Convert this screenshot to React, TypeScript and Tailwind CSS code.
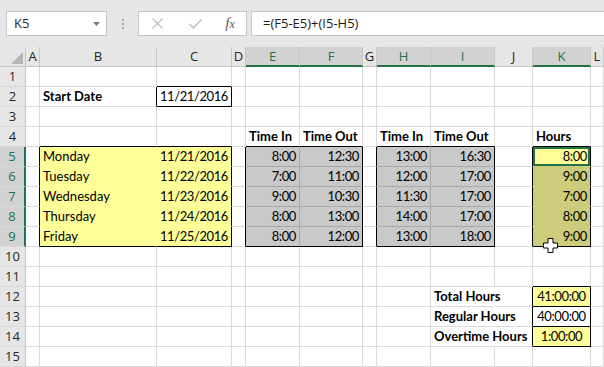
import React from 'react';

type Fill = 'yellow' | 'gray' | 'olive' | undefined;
type Edge = 'grid' | 'black' | 'white' | 'yellow' | 'gray' | 'olive' | 'inner';

interface Cell {
  t: string;
  b?: boolean;
  a?: 'l' | 'r' | 'c';
}

const COLS = ['A', 'B', 'C', 'D', 'E', 'F', 'G', 'H', 'I', 'J', 'K', 'L'];
const HOT_COLS = ['E', 'F', 'H', 'I', 'K'];
const ROWS = Array.from({ length: 15 }, (_, i) => i + 1);

const days = ['Monday', 'Tuesday', 'Wednesday', 'Thursday', 'Friday'];
const dates = ['11/21/2016', '11/22/2016', '11/23/2016', '11/24/2016', '11/25/2016'];
const e = ['8:00', '7:00', '9:00', '8:00', '8:00'];
const f = ['12:30', '11:00', '10:30', '13:00', '12:00'];
const h = ['13:00', '12:00', '11:30', '14:00', '13:00'];
const i_ = ['16:30', '17:00', '17:00', '17:00', '18:00'];
const k = ['8:00', '9:00', '7:00', '8:00', '9:00'];

const cells: Record<string, Cell> = {
  B2: { t: 'Start Date', b: true },
  C2: { t: '11/21/2016', a: 'r' },
  E4: { t: 'Time In', b: true },
  F4: { t: 'Time Out', b: true },
  H4: { t: 'Time In', b: true },
  I4: { t: 'Time Out', b: true },
  K4: { t: 'Hours', b: true },
  I12: { t: 'Total Hours', b: true },
  I13: { t: 'Regular Hours', b: true },
  I14: { t: 'Overtime Hours', b: true },
  K12: { t: '41:00:00', a: 'c' },
  K13: { t: '40:00:00', a: 'c' },
  K14: { t: '1:00:00', a: 'c' },
};
days.forEach((d, n) => {
  const r = n + 5;
  cells['B' + r] = { t: d };
  cells['C' + r] = { t: dates[n], a: 'r' };
  cells['E' + r] = { t: e[n], a: 'r' };
  cells['F' + r] = { t: f[n], a: 'r' };
  cells['H' + r] = { t: h[n], a: 'r' };
  cells['I' + r] = { t: i_[n], a: 'r' };
  cells['K' + r] = { t: k[n], a: 'r' };
});

// column index 1 = A ... 12 = L
const ci = (c: string) => COLS.indexOf(c) + 1;

const boxes = [
  [ci('C'), ci('C'), 2, 2],
  [ci('B'), ci('C'), 5, 9],
  [ci('E'), ci('F'), 5, 9],
  [ci('H'), ci('I'), 5, 9],
  [ci('K'), ci('K'), 5, 9],
  [ci('K'), ci('K'), 12, 12],
  [ci('K'), ci('K'), 13, 13],
  [ci('K'), ci('K'), 14, 14],
];

function fillAt(c: number, r: number): Fill {
  if (r >= 5 && r <= 9 && (c === 2 || c === 3)) return 'yellow';
  if (r >= 5 && r <= 9 && (c === 5 || c === 6 || c === 8 || c === 9)) return 'gray';
  if (c === 11 && r === 5) return 'yellow';
  if (c === 11 && r >= 6 && r <= 9) return 'olive';
  if (c === 11 && (r === 12 || r === 14)) return 'yellow';
  return undefined;
}

const inBox = (c: number, r: number, b: number[]) =>
  c >= b[0] && c <= b[1] && r >= b[2] && r <= b[3];

function rightEdge(c: number, r: number): Edge {
  for (const b of boxes) {
    if (inBox(c, r, b) && c === b[1]) return 'black';
    if (inBox(c + 1, r, b) && c + 1 === b[0]) return 'black';
  }
  if (c === 9 && r >= 12 && r <= 14) return 'white';
  const a = fillAt(c, r);
  const n = fillAt(c + 1, r);
  if (a && n) return a === 'gray' ? 'inner' : n;
  return 'grid';
}

function bottomEdge(c: number, r: number): Edge {
  for (const b of boxes) {
    if (inBox(c, r, b) && r === b[3]) return 'black';
    if (inBox(c, r + 1, b) && r + 1 === b[2]) return 'black';
  }
  const a = fillAt(c, r);
  const n = fillAt(c, r + 1);
  if (a && n) return a === 'gray' ? 'inner' : n;
  return 'grid';
}

const RIGHT: Record<Edge, string> = {
  grid: 'border-r-[#d9d9d9]',
  black: 'border-r-black',
  white: 'border-r-white',
  yellow: 'border-r-[#ffff99]',
  gray: 'border-r-[#c9c9c9]',
  olive: 'border-r-[#cccc7b]',
  inner: 'border-r-[#a9a9a9]',
};
const BOTTOM: Record<Edge, string> = {
  grid: 'border-b-[#d9d9d9]',
  black: 'border-b-black',
  white: 'border-b-white',
  yellow: 'border-b-[#ffff99]',
  gray: 'border-b-[#c9c9c9]',
  olive: 'border-b-[#cccc7b]',
  inner: 'border-b-[#a9a9a9]',
};
const FILL: Record<string, string> = {
  yellow: 'bg-[#ffff99]',
  gray: 'bg-[#c9c9c9]',
  olive: 'bg-[#cccc7b]',
  none: '',
};
const ALIGN = { l: 'justify-start', r: 'justify-end', c: 'justify-center' };

function Toolbar() {
  return (
    <div className="h-[47px] bg-[#e6e6e6] flex items-start pt-[11px] pl-[6px]">
      <div className="w-[101px] h-[25px] bg-white border border-[#c6c6c6] flex items-center pl-[7px] pr-[6px]">
        <span className="text-[13px] text-[#262626]">K5</span>
        <svg className="ml-auto" width="7" height="4" viewBox="0 0 7 4">
          <path d="M0 0h7L3.5 4z" fill="#7a7a7a" />
        </svg>
      </div>
      <div className="w-[31px] h-[25px] flex flex-col items-center justify-center gap-[2px]">
        <span className="w-[2px] h-[2px] bg-[#a8a8a8]" />
        <span className="w-[2px] h-[2px] bg-[#a8a8a8]" />
        <span className="w-[2px] h-[2px] bg-[#a8a8a8]" />
      </div>
      <div className="w-[109px] h-[25px] bg-white border border-[#c6c6c6] flex items-center">
        <div className="w-[37px] flex justify-center">
          <svg width="11" height="11" viewBox="0 0 11 11">
            <path d="M0.5 0.5l10 10M10.5 0.5l-10 10" stroke="#bfbfbf" strokeWidth="1.3" />
          </svg>
        </div>
        <div className="w-[38px] flex justify-center">
          <svg width="13" height="10" viewBox="0 0 13 10">
            <path d="M0.5 5l4 4 8-8.5" stroke="#bfbfbf" strokeWidth="1.5" fill="none" />
          </svg>
        </div>
        <div className="w-[32px] flex justify-center">
          <span className="font-['Liberation_Serif',serif] italic text-[15px] text-[#595959] leading-none">
            f<span className="text-[12px]">x</span>
          </span>
        </div>
      </div>
      <div className="ml-[4px] flex-1 h-[25px] bg-white border-y border-l border-[#c6c6c6] flex items-center pl-[11px]">
        <span className="text-[13px] text-[#1a1a1a]">=(F5-E5)+(I5-H5)</span>
      </div>
    </div>
  );
}

function Sheet() {
  return (
    <div className="relative grid grid-cols-[26px_14px_117px_75px_14px_54px_63px_14px_54px_64px_38px_58px_13px] auto-rows-[20px]">
      <div className="bg-[#e6e6e6] border-r border-b border-[#c6c6c6] flex items-end justify-end pr-[2px] pb-[2px]">
        <svg width="12" height="12" viewBox="0 0 12 12">
          <path d="M12 0v12H0z" fill="#b5b5b5" />
        </svg>
      </div>
      {COLS.map(c => {
        const hot = HOT_COLS.includes(c);
        return (
          <div
            key={c}
            className={`${
              hot
                ? 'bg-[#d2d2d2] text-[#217346] border-b-2 border-b-[#217346]'
                : 'bg-[#e6e6e6] text-[#262626] border-b border-b-[#c6c6c6]'
            } border-r border-r-[#c6c6c6] flex items-center justify-center text-[13px] leading-none`}
          >
            {c}
          </div>
        );
      })}
      {ROWS.map(r => {
        const hot = r >= 5 && r <= 9;
        return (
          <React.Fragment key={r}>
            <div
              className={`${
                hot
                  ? 'bg-[#d2d2d2] text-[#217346] border-r-2 border-r-[#217346]'
                  : 'bg-[#e6e6e6] text-[#262626] border-r border-r-[#c6c6c6]'
              } border-b border-b-[#d9d9d9] flex items-center justify-center text-[13px] leading-none`}
            >
              {r}
            </div>
            {COLS.map((c, idx) => {
              const col = idx + 1;
              const cell = cells[c + r];
              const fill = fillAt(col, r) ?? 'none';
              const active = c === 'K' && r === 5;
              return (
                <div
                  key={c}
                  className={`${FILL[fill]} ${RIGHT[rightEdge(col, r)]} ${
                    BOTTOM[bottomEdge(col, r)]
                  } ${
                    active ? 'shadow-[inset_0_0_0_2px_#217346]' : ''
                  } border-r border-b flex items-end px-[3px] pb-[2px] font-['Lato',sans-serif] text-[13px] leading-[16px] text-black whitespace-nowrap ${
                    cell ? ALIGN[cell.a ?? 'l'] : ''
                  }`}
                >
                  {cell && (
                    <span
                      className={
                        cell.b ? 'font-bold' : cell.a ? 'tracking-[-0.4px]' : ''
                      }
                    >
                      {cell.t}
                    </span>
                  )}
                </div>
              );
            })}
          </React.Fragment>
        );
      })}
      {/* fat cross cursor */}
      <svg
        className="absolute left-[542px] top-[190px]"
        width="17"
        height="17"
        viewBox="0 0 17 17"
      >
        <path
          d="M6 1.5h5v4.5h4.5v5H11v4.5H6V11H1.5V6H6z"
          fill="white"
          stroke="black"
          strokeWidth="1"
        />
      </svg>
    </div>
  );
}

export default function App() {
  return (
    <div className="w-[604px] h-[367px] overflow-hidden bg-white font-['Open_Sans',sans-serif]">
      <Toolbar />
      <Sheet />
    </div>
  );
}
